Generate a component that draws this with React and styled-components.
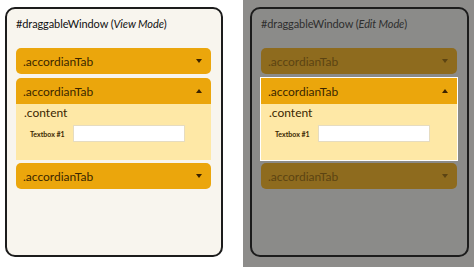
import React from "react";
import styled, { createGlobalStyle } from "styled-components";

const GlobalStyle = createGlobalStyle`
  body {
    margin: 0;
    background: #ffffff;
    font-family: "Lato", "Open Sans", sans-serif;
  }
`;

const Page = styled.div`
  display: flex;
  width: 474px;
  height: 267px;
  overflow: hidden;
`;

const Pane = styled.div`
  width: ${({ $edit }) => ($edit ? "231px" : "243px")};
  height: 267px;
  box-sizing: border-box;
  padding: ${({ $edit }) => ($edit ? "7px 5px 0 7px" : "7px 20px 0 5px")};
  background: ${({ $edit }) => ($edit ? "#8d8c8a" : "#ffffff")};
`;

const Window = styled.div`
  height: 250px;
  box-sizing: border-box;
  border: 2px solid #1c1c1c;
  border-radius: 10px;
  background: ${({ $edit }) => ($edit ? "#8b8b89" : "#f8f5ee")};
  padding: 0 10px 0 9px;
  display: flex;
  flex-direction: column;
`;

const Title = styled.div`
  height: 39px;
  padding-top: 8px;
  box-sizing: border-box;
  font-size: 11px;
  color: ${({ $edit }) => ($edit ? "#2e2e2e" : "#111111")};
  letter-spacing: -0.1px;
  em {
    font-style: italic;
  }
`;

const Group = styled.div`
  display: flex;
  flex-direction: column;
  margin-bottom: ${({ $gap }) => $gap}px;
  outline: ${({ $highlight }) => ($highlight ? "1px solid #ffffff" : "none")};
`;

const Tab = styled.div`
  height: 26px;
  box-sizing: border-box;
  display: flex;
  align-items: center;
  justify-content: space-between;
  padding: 0 9px 0 7px;
  font-size: 12px;
  border-radius: ${({ $open }) => ($open ? "5px 5px 0 0" : "5px")};
  background: ${({ $dim }) => ($dim ? "#8e6b1e" : "#eba60c")};
  color: ${({ $dim }) => ($dim ? "#5c4412" : "#3b2600")};
  ${({ $edge }) => ($edge ? "border-radius: 0;" : "")}
`;

const Arrow = styled.span`
  width: 0;
  height: 0;
  border-left: 3.5px solid transparent;
  border-right: 3.5px solid transparent;
  ${({ $up, $dim }) =>
    $up
      ? `border-bottom: 4px solid ${$dim ? "#5c4412" : "#3b2300"};`
      : `border-top: 4px solid ${$dim ? "#5c4412" : "#3b2300"};`}
`;

const Content = styled.div`
  height: 56px;
  box-sizing: border-box;
  background: #fee8a6;
  padding: 1px 0 0 8px;
  display: flex;
  flex-direction: column;
`;

const ContentLabel = styled.div`
  font-size: 12px;
  color: #3b2600;
  height: 20px;
  line-height: 16px;
`;

const Field = styled.div`
  display: flex;
  align-items: center;
  padding-left: 6px;
  gap: 9px;
`;

const FieldLabel = styled.span`
  font-size: 7px;
  font-weight: 700;
  color: #3b2600;
  width: 34px;
  white-space: nowrap;
`;

const Input = styled.div`
  width: 112px;
  height: 17px;
  box-sizing: border-box;
  background: #ffffff;
  border: 1px solid #e6dcc0;
`;

function Accordion({ edit }) {
  return (
    <>
      <Group $gap={4}>
        <Tab $dim={edit}>
          .accordianTab
          <Arrow $dim={edit} />
        </Tab>
      </Group>
      <Group $gap={3} $highlight={edit}>
        <Tab $open $edge={edit}>
          .accordianTab
          <Arrow $up />
        </Tab>
        <Content>
          <ContentLabel>.content</ContentLabel>
          <Field>
            <FieldLabel>Textbox #1</FieldLabel>
            <Input />
          </Field>
        </Content>
      </Group>
      <Group $gap={0}>
        <Tab $dim={edit}>
          .accordianTab
          <Arrow $dim={edit} />
        </Tab>
      </Group>
    </>
  );
}

export default function App() {
  return (
    <Page>
      <GlobalStyle />
      <Pane>
        <Window>
          <Title>
            #draggableWindow (<em>View Mode</em>)
          </Title>
          <Accordion />
        </Window>
      </Pane>
      <Pane $edit>
        <Window $edit>
          <Title $edit>
            #draggableWindow (<em>Edit Mode</em>)
          </Title>
          <Accordion edit />
        </Window>
      </Pane>
    </Page>
  );
}
